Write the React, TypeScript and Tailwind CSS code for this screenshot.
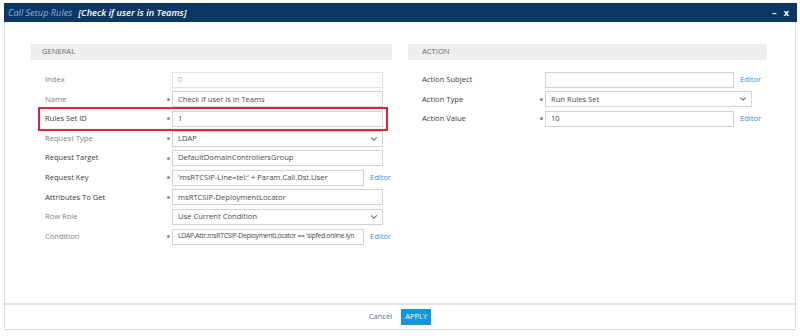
import { ChevronDown } from 'lucide-react';

type Row = {
  label: string;
  value: string;
  dark?: boolean;
  dot?: boolean;
  select?: boolean;
  editor?: boolean;
  disabled?: boolean;
  highlight?: boolean;
  tight?: boolean;
};

const general: Row[] = [
  { label: 'Index', value: '0', disabled: true },
  { label: 'Name', value: 'Check if user is in Teams', dot: true },
  { label: 'Rules Set ID', value: '1', dark: true, dot: true, highlight: true },
  { label: 'Request Type', value: 'LDAP', dot: true, select: true },
  { label: 'Request Target', value: 'DefaultDomainControllersGroup', dark: true, dot: true },
  { label: 'Request Key', value: "'msRTCSIP-Line=tel:' + Param.Call.Dst.User", dark: true, dot: true, editor: true },
  { label: 'Attributes To Get', value: 'msRTCSIP-DeploymentLocator', dark: true, dot: true },
  { label: 'Row Role', value: 'Use Current Condition', select: true },
  {
    label: 'Condition',
    value: "LDAP.Attr.msRTCSIP-DeploymentLocator == 'sipfed.online.lyn",
    dot: true,
    editor: true,
    tight: true,
  },
];

const action: Row[] = [
  { label: 'Action Subject', value: '', dark: true, editor: true },
  { label: 'Action Type', value: 'Run Rules Set', dark: true, dot: true, select: true },
  { label: 'Action Value', value: '10', dark: true, dot: true, editor: true },
];

function FieldRow({ row, side }: { row: Row; side: 'left' | 'right' }) {
  const labelW = side === 'left' ? 'w-[136px]' : 'w-[132px]';
  const fullW = side === 'left' ? 'w-[211px]' : 'w-[207px]';
  const editW = side === 'left' ? 'w-[192px]' : 'w-[189px]';

  return (
    <div className="relative flex h-[19.6px] items-center">
      {row.highlight && (
        <span className="absolute left-[7px] right-[4px] -top-[2px] -bottom-[2px] border-2 border-[#d9283e]" />
      )}
      <div className={`${labelW} shrink-0 pl-[14px] ${row.dark ? 'text-[#3a3a3a]' : 'text-[#808080]'}`}>
        {row.label}
      </div>
      <div className="flex w-[5px] shrink-0 items-center">
        {row.dot && <span className="h-[3px] w-[3px] rounded-full bg-[#8a8a8a]" />}
      </div>
      <div
        className={`flex h-[16px] items-center overflow-hidden whitespace-nowrap border pl-[5px] pr-[3px] ${
          row.editor ? editW : fullW
        } ${row.disabled ? 'border-[#e3e3e3] text-[#b0b0b0]' : 'border-[#d2d2d2] text-[#4a4a4a]'}`}
      >
        <span className={`flex-1 overflow-hidden ${row.tight ? 'text-[6.8px] tracking-[-0.3px]' : ''}`}>
          {row.value}
        </span>
        {row.select && <ChevronDown size={10} strokeWidth={2.5} className="shrink-0 text-[#555]" />}
      </div>
      {row.editor && <span className="ml-[6px] text-[#3c8dd3]">Editor</span>}
    </div>
  );
}

export default function App() {
  return (
    <div
      className="h-[336px] w-[800px] overflow-hidden bg-white pt-[3px] text-[7.6px]"
      style={{ fontFamily: '"Open Sans", "Noto Sans", sans-serif' }}
    >
      <div className="mx-[4px] w-[793px]">
        {/* Title bar */}
        <div className="flex h-[19px] items-center bg-[#0c3763] pl-[4px] pr-[8px] text-[9.2px] italic">
          <span className="text-[#86b5e6]">Call Setup Rules</span>
          <span className="ml-[6px] font-semibold text-white">[Check if user is in Teams]</span>
          <span className="ml-auto font-bold not-italic text-white">–</span>
          <span className="ml-[7px] font-bold not-italic text-white">x</span>
        </div>

        <div className="mr-[1px] border-x border-b border-[#dcdcdc]">
          {/* Body */}
          <div className="flex h-[281px] gap-[16px] pl-[26px] pt-[22px]">
            <div className="w-[361px]">
              <div className="flex h-[16px] items-center bg-[#eeeeee] pl-[11px] text-[#6a6a6a]">GENERAL</div>
              <div className="mt-[10px] flex flex-col">
                {general.map((r) => (
                  <FieldRow key={r.label} row={r} side="left" />
                ))}
              </div>
            </div>
            <div className="w-[359px]">
              <div className="flex h-[16px] items-center bg-[#eeeeee] pl-[14px] text-[#6a6a6a]">ACTION</div>
              <div className="mt-[10px] flex flex-col">
                {action.map((r) => (
                  <FieldRow key={r.label} row={r} side="right" />
                ))}
              </div>
            </div>
          </div>

          {/* Footer */}
          <div className="flex h-[26px] items-center justify-center border-t-2 border-[#e2e2e2]">
            <span className="text-[#4f6f9a]">Cancel</span>
            <span className="ml-[9px] flex h-[16px] items-center bg-[#1495dc] px-[4px] text-white">APPLY</span>
          </div>
        </div>
      </div>
    </div>
  );
}
